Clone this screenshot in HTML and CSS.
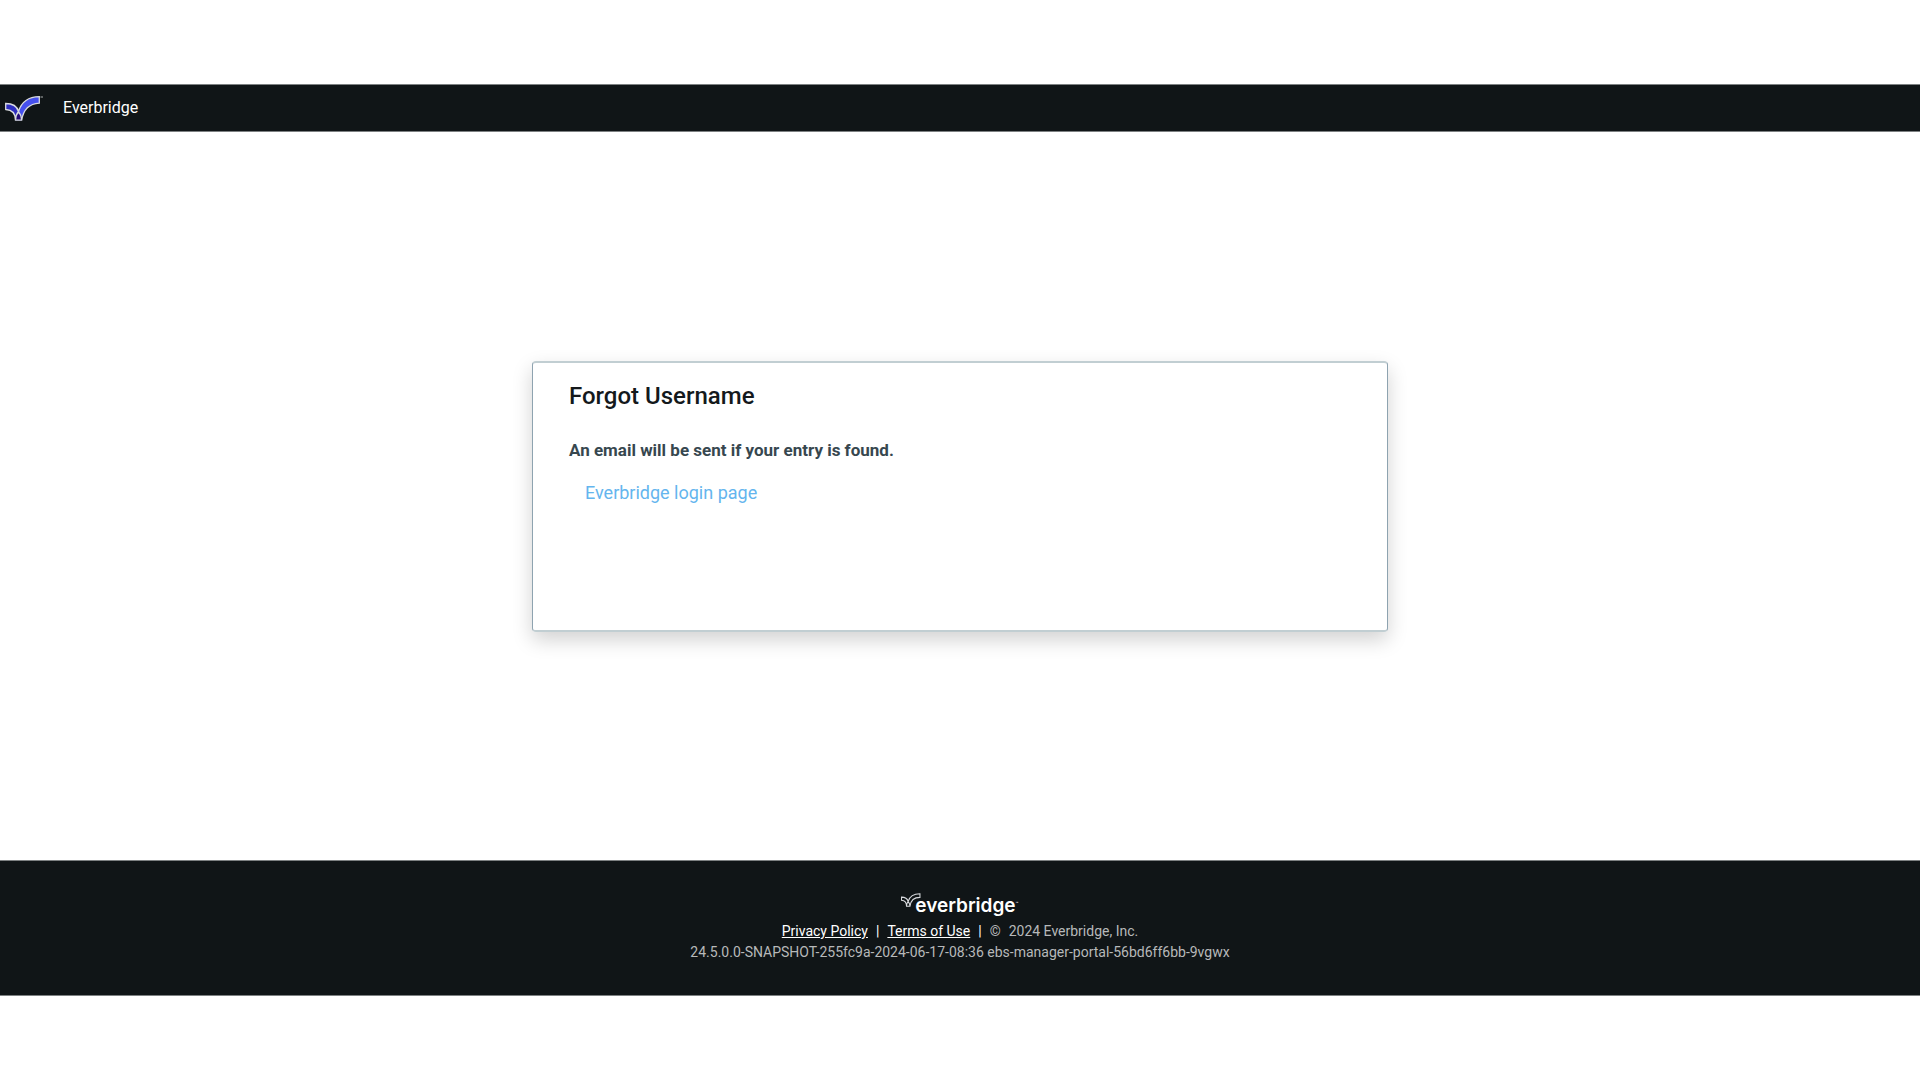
FILE: index.html
```html
<!DOCTYPE html>
<html lang="en">

<head>
    <meta charset="UTF-8">
    <meta name="viewport" content="width=device-width, initial-scale=1.0">
    <title>Everbridge</title>
    <link rel="stylesheet" href="styles.css">
</head>

<body>
    <header class="header">
        <svg class="header-logo" viewBox="0 0 38 26" aria-hidden="true">
            <path d="M0.7 8.500C7 8.500 12 11 13.500 16.500C16.500 7 24 1.800 34.300 1.700V8.200C24 8.800 18.500 14 16.700 25.200H10.500C10.500 18 7 14.800 0.700 14.500Z" fill="#4650ee"/>
            <path d="M0.7 8.500C7 8.500 12 11 13.500 16.500C12 19 10.500 22 10.500 25.200C10.500 18 7 14.800 0.700 14.500Z" fill="#2f2fc0"/>
            <path d="M13.500 16.500C15.500 19 16.700 22 16.700 25.200H10.500C10.500 22 11.500 19 13.500 16.500Z" fill="#240a78"/>
            <path d="M0.7 8.500C7 8.500 12 11 13.500 16.500C16.500 7 24 1.800 34.300 1.700V8.200C24 8.800 18.500 14 16.700 25.200H10.500C10.500 18 7 14.800 0.700 14.500ZM13.500 16.500C11.500 19 10.500 22 10.500 25.200M13.500 16.500C15.500 19 16.700 22 16.700 25.200" fill="none" stroke="#d8dade" stroke-width="1.300"/>
            <path d="M35.500 2H38" stroke="#777b7d" stroke-width="1.500"/>
        </svg>
        <span>Everbridge</span>
    </header>

    <main class="main">
        <section class="card">
            <h1>Forgot Username</h1>
            <p>An email will be sent if your entry is found.</p>
            <a href="#login">Everbridge login page</a>
        </section>
    </main>

    <footer class="footer">
        <div class="brand">
            <svg class="brand-mark" viewBox="0 0 38 26" aria-hidden="true">
                <path d="M1 7.500C7 7.500 12 10 13.500 15.500C16.500 6 24 1 36 1V8C25 8 18.500 13 17 25H10.500C10.500 17 7 13.800 1 13.500ZM13.500 15.500C11.500 18 10.500 21 10.500 25M13.500 15.500C15.500 18 17 21 17 25"/>
            </svg>
            <span class="brand-name">everbridge</span>
            <span class="brand-tm">™</span>
        </div>
        <div class="legal">
            <a href="#privacy">Privacy Policy</a>
            <span class="divider">|</span>
            <a href="#terms">Terms of Use</a>
            <span class="divider">|</span>
            <span>©</span>
            <span>2024 Everbridge, Inc.</span>
        </div>
        <div class="version">24.5.0.0-SNAPSHOT-255fc9a-2024-06-17-08:36 ebs-manager-portal-56bd6ff6bb-9vgwx</div>
    </footer>
</body>

</html>
```

FILE: styles.css
```css
* {
    box-sizing: border-box;
}

body {
    display: flex;
    flex-direction: column;
    min-height: 100vh;
    margin: 0;
    padding: 84px 0;
    background: #fff;
    font-family: Roboto, sans-serif;
}

.header {
    display: flex;
    align-items: center;
    gap: 20px;
    padding: 10px 5px;
    background: #101517;
    border-top: 1px solid #7d8182;
    border-bottom: 1px solid #7d8182;
    color: #fff;
    font-size: 16px;
    line-height: 24px;
}

.header-logo {
    width: 38px;
    height: 26px;
}

.main {
    display: flex;
    flex: 1;
    align-items: center;
    justify-content: center;
}

.card {
    width: 100%;
    max-width: 856px;
    min-height: 271px;
    padding: 15px 36px;
    border: solid #c1ced2;
    border-width: 2px 1px;
    border-left-color: #8ea3b0;
    border-right-color: #8ea3b0;
    border-radius: 4px;
    box-shadow: 0 8px 20px rgba(0, 0, 0, 0.18);
}

.card h1 {
    margin: 0 0 24px;
    color: #14191c;
    font-size: 24px;
    font-weight: 500;
    line-height: 36px;
}

.card p {
    margin: 0 0 17px;
    color: #37474f;
    font-size: 17px;
    font-weight: 700;
    line-height: 24px;
}

.card a {
    margin-left: 16px;
    color: #64b5ee;
    font-size: 18px;
    line-height: 28px;
    text-decoration: none;
}

.footer {
    padding: 32px 0;
    background: #101517;
    border-top: 1px solid #7d8182;
    border-bottom: 1px solid #7d8182;
    color: #b7b9ba;
    font-size: 14px;
    line-height: 21px;
    text-align: center;
}

.brand {
    display: flex;
    justify-content: center;
    height: 28px;
    color: #fff;
}

.brand-mark {
    width: 20px;
    height: 14px;
    margin-right: -6px;
    fill: none;
    stroke: #d8dade;
    stroke-width: 2;
}

.brand-name {
    font-family: Inter, sans-serif;
    font-size: 19px;
    font-weight: 600;
    line-height: 26px;
}

.brand-tm {
    font-size: 5px;
    line-height: 20px;
}

.legal {
    display: flex;
    justify-content: center;
    gap: 8px;
}

.legal a,
.divider {
    color: #fff;
}
```
